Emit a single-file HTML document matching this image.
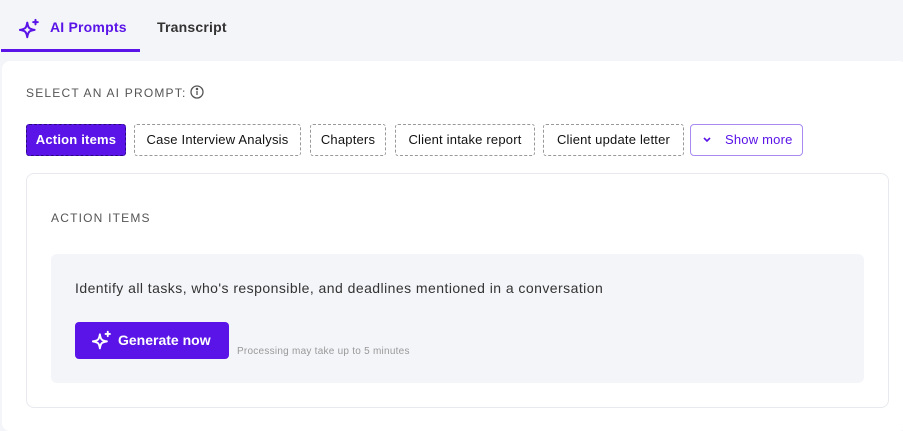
<!DOCTYPE html>
<html><head><style>
*{box-sizing:border-box;margin:0;padding:0}
body{width:903px;height:422px;background:#f4f5f9;font-family:"Liberation Sans",Arial,sans-serif;position:relative;overflow:hidden;color:#222}
.tab{position:absolute;top:19px;font-size:14px;font-weight:bold;letter-spacing:0.2px}
.panel{position:absolute;left:2px;top:61px;width:905px;height:370px;background:#fff;border-radius:8px}
.lbl{position:absolute;font-size:12px;letter-spacing:1.2px;color:#555}
.chip{position:absolute;top:124px;height:32px;border:1px dashed #999;border-radius:3px;font-size:13px;line-height:30px;text-align:center;color:#111;letter-spacing:0.2px}
.card{position:absolute;left:26px;top:173px;width:863px;height:235px;border:1px solid #e8e9ee;border-radius:8px;background:#fff}
.box{position:absolute;left:51px;top:254px;width:813px;height:129px;background:#f4f5f9;border-radius:6px}
</style></head><body>
<svg style="position:absolute;left:19px;top:18px" width="22" height="22" viewBox="0 0 24 24" fill="none" stroke="#5a14e8" stroke-width="2.2" stroke-linejoin="round"><path d="M9 5 C10 11 11 12 17 13 C11 14 10 15 9 21 C8 15 7 14 1 13 C7 12 8 11 9 5Z"/><path d="M18 2v5M15.5 4.5h5" stroke-linecap="round"/></svg>
<div class="tab" style="left:50px;color:#5a14e8">AI Prompts</div>
<div class="tab" style="left:157px;color:#333">Transcript</div>
<div style="position:absolute;left:1px;top:49px;width:139px;height:3px;background:#5a14e8"></div>
<div class="panel"></div>
<div class="lbl" style="left:26px;top:86px">SELECT AN AI PROMPT:</div>
<svg style="position:absolute;left:190px;top:85px" width="14" height="14" viewBox="0 0 14 14" fill="none" stroke="#555" stroke-width="1.3"><circle cx="7" cy="7" r="6"/><path d="M7 6v4"/><circle cx="7" cy="4" r=".6" fill="#555"/></svg>
<div class="chip" style="left:26px;width:100px;background:#5a14e8;color:#fff;font-weight:bold;border-color:#2a0a80">Action items</div>
<div class="chip" style="left:134px;width:167px">Case Interview Analysis</div>
<div class="chip" style="left:310px;width:76px">Chapters</div>
<div class="chip" style="left:395px;width:140px">Client intake report</div>
<div class="chip" style="left:543px;width:141px">Client update letter</div>
<div class="chip" style="left:690px;width:113px;border:1px solid #a88bf0;color:#5a14e8;border-radius:4px;text-align:left;padding-left:34px">Show more</div>
<svg style="position:absolute;left:702px;top:136px" width="10" height="8" viewBox="0 0 10 8" fill="none" stroke="#5a14e8" stroke-width="1.6"><path d="M2 2l3 3 3-3"/></svg>
<div class="card"></div>
<div class="lbl" style="left:51px;top:211px">ACTION ITEMS</div>
<div class="box"></div>
<div style="position:absolute;left:75px;top:280px;font-size:14px;color:#333;letter-spacing:0.45px">Identify all tasks, who's responsible, and deadlines mentioned in a conversation</div>
<div style="position:absolute;left:75px;top:322px;width:154px;height:37px;background:#5a14e8;border-radius:4px"></div>
<svg style="position:absolute;left:92px;top:330px" width="21" height="21" viewBox="0 0 24 24" fill="none" stroke="#fff" stroke-width="2.2" stroke-linejoin="round"><path d="M9 5 C10 11 11 12 17 13 C11 14 10 15 9 21 C8 15 7 14 1 13 C7 12 8 11 9 5Z"/><path d="M18 2v5M15.5 4.5h5" stroke-linecap="round"/></svg>
<div style="position:absolute;left:118px;top:332px;font-size:14px;font-weight:bold;color:#fff">Generate now</div>
<div style="position:absolute;left:237px;top:346px;font-size:10px;color:#999;letter-spacing:0.25px">Processing may take up to 5 minutes</div>
</body></html>
